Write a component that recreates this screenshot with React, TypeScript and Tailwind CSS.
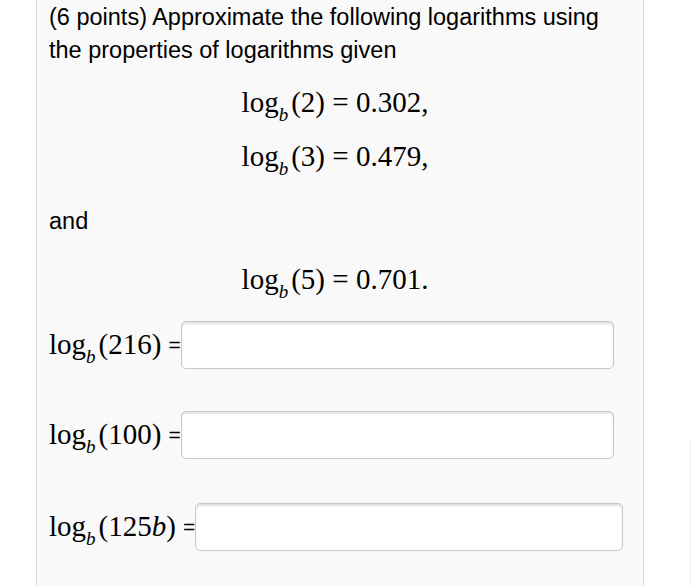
const serif = { fontFamily: '"Liberation Serif", "Times New Roman", serif' }

function LogB({ arg }: { arg: React.ReactNode }) {
  return (
    <span className="font-['Liberation_Serif',serif] whitespace-nowrap">
      log<sub className="italic text-[19px] relative top-[3px] align-sub leading-none mr-[3px]">b</sub>({arg})
    </span>
  )
}

function Given({ arg, value }: { arg: string; value: string }) {
  return (
    <div className="h-[34px] flex items-center justify-center text-[29px] leading-[34px] text-black font-['Liberation_Serif',serif]">
      <span className="pr-[2px]">
        <LogB arg={arg} /> = {value}
      </span>
    </div>
  )
}

function AnswerRow({ arg, className = "" }: { arg: React.ReactNode; className?: string }) {
  return (
    <div className={`h-[48px] flex items-center ${className}`}>
      <span className="text-[29px] leading-[34px] text-black">
        <LogB arg={arg} />
      </span>
      <span className="ml-[7px] text-[21px] font-['Liberation_Sans',sans-serif] text-black">=</span>
      <input
        type="text"
        className="w-[433px] h-[48px] rounded-[5px] border border-[#c8c8c8] bg-white shadow-[inset_0_2px_2px_rgba(0,0,0,0.12)] outline-none"
      />
    </div>
  )
}

export default function App() {
  return (
    <div className="w-[700px] h-[586px] bg-white overflow-hidden flex">
      <div className="ml-[36px] w-[608px] h-[586px] bg-[#f9f9f9] border-x border-[#dcdcdc] pl-[12px] pr-[20px] font-['Liberation_Sans',Arial,sans-serif] text-black">
        <p className="text-[23.5px] leading-[33px] pt-[1px]">
          (6 points) Approximate the following logarithms using the properties of logarithms given
        </p>
        <div className="mt-[19px] flex flex-col gap-[20px]" style={serif}>
          <Given arg="2" value="0.302," />
          <Given arg="3" value="0.479," />
        </div>
        <p className="mt-[31px] h-[33px] text-[23.5px] leading-[33px]">and</p>
        <div className="mt-[25px]">
          <Given arg="5" value="0.701." />
        </div>
        <div className="mt-[24px] flex flex-col gap-[42px]">
          <AnswerRow arg="216" />
          <AnswerRow arg="100" />
          <AnswerRow
            className="mt-[2px]"
            arg={
              <>
                125<i>b</i>
              </>
            }
          />
        </div>
      </div>
      <div className="ml-[46px] mt-[440px] w-px h-[146px] bg-[#f0f0f0]" />
    </div>
  )
}
